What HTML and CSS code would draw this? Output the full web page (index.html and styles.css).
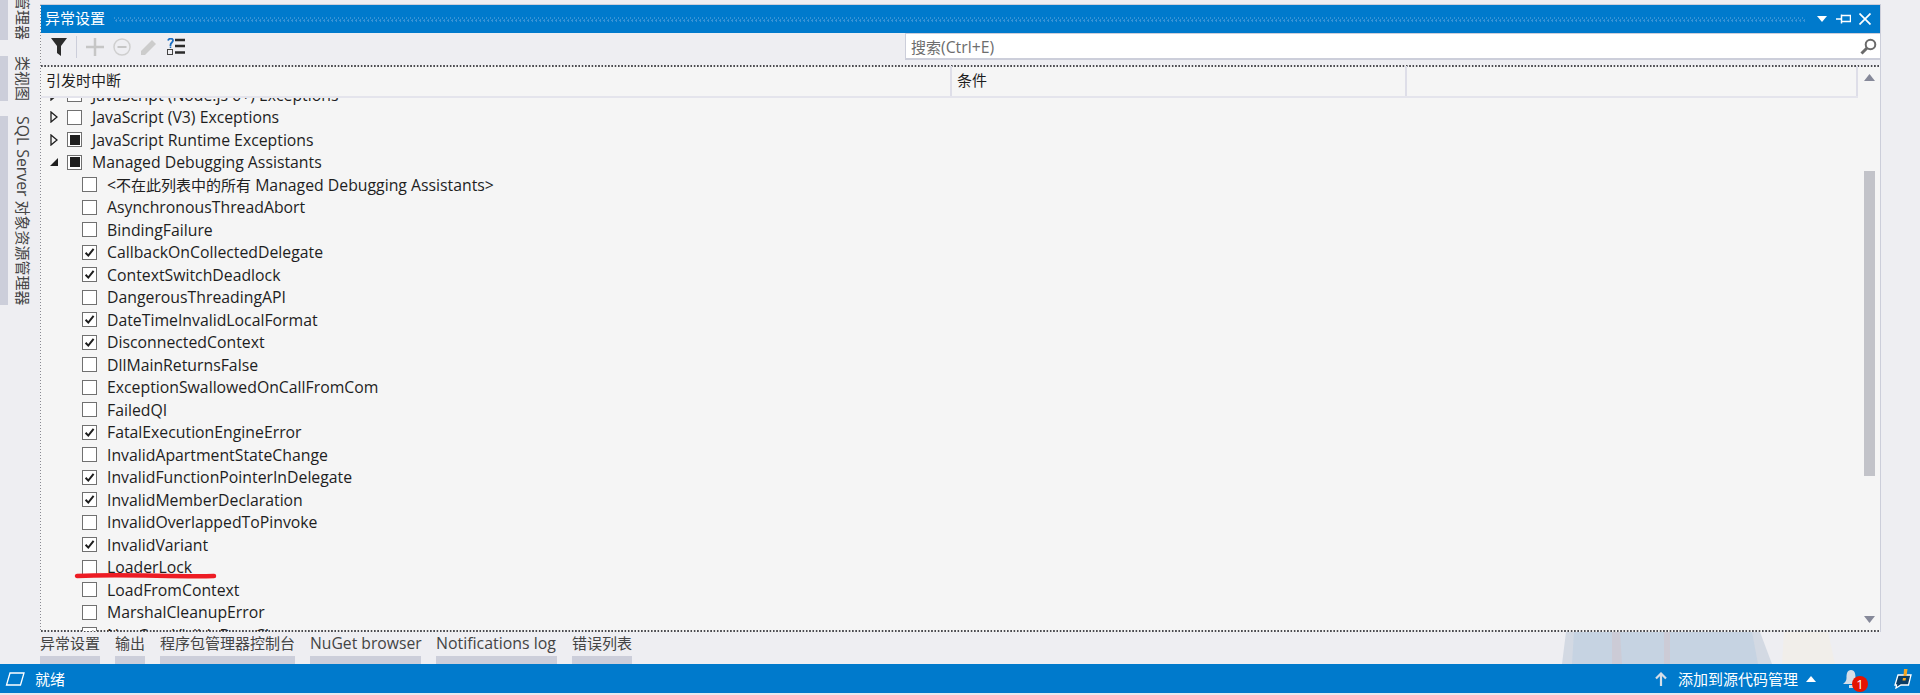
FILE: index.html
```html
<!DOCTYPE html>
<html lang="zh">
<head>
<meta charset="utf-8">
<title>异常设置</title>
<link rel="stylesheet" href="styles.css">
</head>
<body>
<svg class="defs" width="0" height="0" aria-hidden="true">
  <symbol id="chk" viewBox="0 0 13 13"><path d="M2.6 6.8 5.3 9.6 10.6 2.9" fill="none" stroke="#1e1e1e" stroke-width="2"/></symbol>
  <symbol id="open" viewBox="0 0 8 12"><path d="M1 1 7 6 1 11Z" fill="#f5f5f5" stroke="#1e1e1e" stroke-width="1.3"/></symbol>
</svg>
<div class="main">
  <nav class="rail">
    <div class="vtab vtab-a"><span class="vbar"></span><span class="vtext zh">解决方案资源管理器</span></div>
    <div class="vtab vtab-b"><span class="vbar"></span><span class="vtext zh">类视图</span></div>
    <div class="vtab vtab-c"><span class="vbar"></span><span class="vtext">SQL Server <span class="zh">对象资源管理器</span></span></div>
  </nav>
  <div class="work">
    <section class="panel">
      <header class="titlebar">
        <span class="title">异常设置</span>
        <span class="grip"></span>
        <span class="winbtns">
          <svg width="12" height="8" viewBox="0 0 12 8"><path d="M1 1H11L6 7Z" fill="#fff"/></svg>
          <svg width="15" height="10" viewBox="0 0 15 10"><path d="M0 5H5M5.500 0.500V9.500M5.500 1.500H14.500V7.500H5.500" fill="none" stroke="#fff" stroke-width="1.500"/></svg>
          <svg width="12" height="12" viewBox="0 0 12 12"><path d="M0.500 0.500 11.500 11.500M11.500 0.500 0.500 11.500" stroke="#fff" stroke-width="1.700"/></svg>
        </span>
      </header>
      <div class="toolbar">
        <div class="tools">
          <svg width="16" height="18" viewBox="0 0 16 18"><path d="M0 0H16L10 8V18L6 15V8Z" fill="#2b2b2b"/></svg>
          <span class="tsep"></span>
          <svg width="18" height="18" viewBox="0 0 18 18"><path d="M9 0V18M0 9H18" stroke="#c6c6c6" stroke-width="2.500"/></svg>
          <svg width="18" height="18" viewBox="0 0 18 18"><circle cx="9" cy="9" r="8" fill="none" stroke="#cfcfcf" stroke-width="1.500"/><path d="M4.500 9H13.500" stroke="#c6c6c6" stroke-width="2"/></svg>
          <svg width="18" height="18" viewBox="0 0 18 18"><path d="M1 13 12 2 16 6 5 17H1Z" fill="#cccccc"/></svg>
          <svg width="18" height="18" viewBox="0 0 18 18"><path d="M8 2H18M8 8H18M8 14.500H18" stroke="#2b2b2b" stroke-width="2.500"/><rect x="0.500" y="11.500" width="5" height="5" fill="none" stroke="#444"/><path d="M1 2.500C2 0 6 0 6 2.500 6 4.500 3.500 4.500 3.500 7V8" fill="none" stroke="#1b6ec2" stroke-width="1.800"/><path d="M3.500 8.500V10" stroke="#1b6ec2" stroke-width="1.500"/></svg>
        </div>
        <div class="search">
          <span class="search-hint"><span class="zh">搜索</span>(Ctrl+E)</span>
          <svg width="17" height="17" viewBox="0 0 17 17"><circle cx="10.500" cy="6.500" r="4.800" fill="none" stroke="#6a6a6a" stroke-width="2"/><path d="M7 10 1.500 15.500" stroke="#6a6a6a" stroke-width="3"/></svg>
        </div>
      </div>
      <div class="body">
        <div class="grid">
          <div class="head">
            <div class="col col-1">引发时中断</div>
            <div class="col col-2">条件</div>
            <div class="col col-3"></div>
          </div>
          <div class="list">
            <div class="rows">
              <div class="row"><svg class="tw" width="8" height="12"><use href="#open"/></svg><span class="cb"></span><span>JavaScript (Node.js 6+) Exceptions</span></div>
              <div class="row"><svg class="tw" width="8" height="12"><use href="#open"/></svg><span class="cb"></span><span>JavaScript (V3) Exceptions</span></div>
              <div class="row"><svg class="tw" width="8" height="12"><use href="#open"/></svg><span class="cb mixed"></span><span>JavaScript Runtime Exceptions</span></div>
              <div class="row"><svg class="tw" width="8" height="8" viewBox="0 0 8 8"><path d="M8 0V8H0Z" fill="#1e1e1e"/></svg><span class="cb mixed"></span><span>Managed Debugging Assistants</span></div>
              <div class="row sub"><span class="cb"></span><span>&lt;<span class="zh">不在此列表中的所有</span> Managed Debugging Assistants&gt;</span></div>
              <div class="row sub"><span class="cb"></span><span>AsynchronousThreadAbort</span></div>
              <div class="row sub"><span class="cb"></span><span>BindingFailure</span></div>
              <div class="row sub"><span class="cb"><svg width="13" height="13"><use href="#chk"/></svg></span><span>CallbackOnCollectedDelegate</span></div>
              <div class="row sub"><span class="cb"><svg width="13" height="13"><use href="#chk"/></svg></span><span>ContextSwitchDeadlock</span></div>
              <div class="row sub"><span class="cb"></span><span>DangerousThreadingAPI</span></div>
              <div class="row sub"><span class="cb"><svg width="13" height="13"><use href="#chk"/></svg></span><span>DateTimeInvalidLocalFormat</span></div>
              <div class="row sub"><span class="cb"><svg width="13" height="13"><use href="#chk"/></svg></span><span>DisconnectedContext</span></div>
              <div class="row sub"><span class="cb"></span><span>DllMainReturnsFalse</span></div>
              <div class="row sub"><span class="cb"></span><span>ExceptionSwallowedOnCallFromCom</span></div>
              <div class="row sub"><span class="cb"></span><span>FailedQI</span></div>
              <div class="row sub"><span class="cb"><svg width="13" height="13"><use href="#chk"/></svg></span><span>FatalExecutionEngineError</span></div>
              <div class="row sub"><span class="cb"></span><span>InvalidApartmentStateChange</span></div>
              <div class="row sub"><span class="cb"><svg width="13" height="13"><use href="#chk"/></svg></span><span>InvalidFunctionPointerInDelegate</span></div>
              <div class="row sub"><span class="cb"><svg width="13" height="13"><use href="#chk"/></svg></span><span>InvalidMemberDeclaration</span></div>
              <div class="row sub"><span class="cb"></span><span>InvalidOverlappedToPinvoke</span></div>
              <div class="row sub"><span class="cb"><svg width="13" height="13"><use href="#chk"/></svg></span><span>InvalidVariant</span></div>
              <div class="row sub"><span class="cb"></span><span>LoaderLock</span></div>
              <div class="row sub"><span class="cb"></span><span>LoadFromContext</span></div>
              <div class="row sub"><span class="cb"></span><span>MarshalCleanupError</span></div>
              <div class="row sub"><span class="cb"><svg width="13" height="13"><use href="#chk"/></svg></span><span>NonComVisibleBaseClass</span></div>
            </div>
            <svg class="scribble" width="146" height="10" viewBox="0 0 146 10"><path d="M3 6C50 4 100 7 140 6" fill="none" stroke="#ed1c24" stroke-width="4.500" stroke-linecap="round"/></svg>
          </div>
        </div>
        <div class="scroll">
          <svg width="11" height="7" viewBox="0 0 11 7"><path d="M5.500 0 11 7H0Z" fill="#868999"/></svg>
          <div class="track"><div class="thumb"></div></div>
          <svg width="11" height="7" viewBox="0 0 11 7"><path d="M0 0H11L5.500 7Z" fill="#868999"/></svg>
        </div>
      </div>
    </section>
    <div class="tabs">
      <svg class="wall" width="280" height="32" viewBox="0 0 280 32"><path d="M4 0H198L210 32H0Z" fill="#d3d9e3"/><path d="M12 0H190L196 32H10Z" fill="#c6d3e2"/><path d="M50 0H58L60 32H50ZM102 0H108L108 32H102Z" fill="#cccbd6"/><path d="M222 0H266L273 32H220Z" fill="#f1eeea"/></svg>
      <div class="tab tab-a">异常设置</div>
      <div class="tab tab-b">输出</div>
      <div class="tab tab-c">程序包管理器控制台</div>
      <div class="tab tab-d">NuGet browser</div>
      <div class="tab tab-e">Notifications log</div>
      <div class="tab tab-f">错误列表</div>
    </div>
  </div>
</div>
<footer class="status">
  <svg class="st-icon" width="20" height="14" viewBox="0 0 20 14"><path d="M5 1H19L15.500 13H1.500Z" fill="none" stroke="#fff" stroke-width="1.300"/></svg>
  <span class="st-text">就绪</span>
  <span class="st-right">
    <svg class="st-up" width="12" height="14" viewBox="0 0 12 14"><path d="M6 14V2M1 6.500 6 1.500 11 6.500" fill="none" stroke="#d4dee8" stroke-width="2.200"/></svg>
    <span class="st-src">添加到源代码管理</span>
    <svg class="st-caret" width="10" height="6" viewBox="0 0 10 6"><path d="M5 0 10 6H0Z" fill="#fff"/></svg>
    <span class="bell">
      <svg width="18" height="18" viewBox="0 0 18 18"><path d="M9 0C13 0 13.500 4 13.500 8C13.500 11 15 12 17 14H1C3 12 4.500 11 4.500 8C4.500 4 5 0 9 0ZM7 15H11V18H7Z" fill="#d4dee8"/></svg>
      <span class="badge">1</span>
    </span>
    <svg class="fb" width="18" height="20" viewBox="0 0 18 20"><path d="M4 6H17L14.500 16H7L2 19 2.500 16H1Z" fill="#0a3d66" stroke="#fff" stroke-width="1.300"/><path d="M10 0H13.500L12.500 7H9.500ZM9 9H12L11.500 11.500H8.500Z" fill="#f5a623"/></svg>
  </span>
</footer>
<div class="edge"></div>
</body>
</html>
```

FILE: styles.css
```css
* { box-sizing: border-box; }
html, body { margin: 0; padding: 0; }
body {
  width: 1920px;
  height: 695px;
  overflow: hidden;
  display: flex;
  flex-direction: column;
  background: #eeeef2;
  color: #1e1e1e;
  font-family: "Open Sans", "Noto Sans CJK SC", sans-serif;
  font-size: 15.800px;
}
.zh { font-size: 15px; }
.defs { position: absolute; }
.main { display: flex; height: 664px; }

.rail { width: 40px; display: flex; flex-direction: column; flex: none; }
.vtab { display: flex; overflow: hidden; }
.vtab-a { height: 40px; align-items: flex-end; }
.vtab-b { height: 45px; margin-top: 16px; }
.vtab-c { height: 189px; margin-top: 15px; }
.vbar { width: 8px; height: 100%; background: #ccceda; flex: none; align-self: stretch; }
.vtext {
  margin-left: 7px;
  writing-mode: vertical-rl;
  text-orientation: sideways;
  white-space: nowrap;
  color: #444444;
  line-height: 16px;
}

.work { width: 1841px; display: flex; flex-direction: column; flex: none; }
.panel {
  margin-top: 4px;
  height: 628px;
  display: flex;
  flex-direction: column;
  border-top: 1px solid #ccceda;
  border-right: 1px solid #ccceda;
  background: #f5f5f5;
  background-image: linear-gradient(#8a8a92 50%, transparent 50%);
  background-size: 1px 3px;
  background-repeat: repeat-y;
  padding-left: 1px;
}
.titlebar { height: 28px; display: flex; align-items: center; background: #007acc; color: #fff; flex: none; }
.title { margin-left: 4px; font-size: 15px; line-height: 20px; margin-top: -2px; }
.grip {
  flex: 1;
  height: 5px;
  margin: 0 11px 0 8px;
  background-image: radial-gradient(circle at 1.500px 1px, #3a94d6 1px, transparent 1.100px), radial-gradient(circle at 3.500px 3.500px, #3a94d6 1px, transparent 1.100px);
  background-size: 4px 5px;
}
.winbtns { display: flex; align-items: center; gap: 8px; width: 64px; }

.toolbar { height: 32px; display: flex; background: #eeeef2; flex: none; }
.tools { width: 864px; display: flex; align-items: center; padding: 0 0 4px 10px; gap: 9px; flex: none; }
.tsep { width: 1px; height: 22px; background: #ccceda; }
.search {
  flex: 1;
  height: 27px;
  display: flex;
  align-items: center;
  justify-content: space-between;
  background: #fff;
  border-top: 1px solid #ccceda;
  border-left: 1px solid #ccceda;
  border-bottom: 2px solid #ccceda;
  padding: 0 3px 0 5px;
}
.search-hint { color: #6d6d6d; line-height: 20px; margin-top: 2px; }

.body {
  flex: 1;
  min-height: 0;
  display: flex;
  border-top: 1px solid transparent;
  border-bottom: 1px solid transparent;
  background:
    linear-gradient(90deg, #4a4a50 50%, transparent 50%) 0 0 / 3.300px 2px repeat-x,
    linear-gradient(90deg, #4a4a50 50%, transparent 50%) 0 100% / 3.300px 2px repeat-x,
    #f5f5f5;
  background-origin: border-box;
}
.grid { width: 1817px; display: flex; flex-direction: column; }
.head { height: 32px; display: flex; border-bottom: 2px solid #e4e4ec; flex: none; }
.col { border-right: 2px solid #dedee8; padding: 3px 0 0 5px; line-height: 22px; font-size: 15px; }
.col-1 { width: 911px; }
.col-2 { width: 455px; padding-left: 5px; }
.col-3 { flex: 1; }
.list { flex: 1; min-height: 0; overflow: hidden; position: relative; }
.rows { margin-top: -14.500px; }
.row { height: 22.500px; line-height: 20px; display: flex; align-items: center; padding-left: 9px; white-space: nowrap; }
.row.sub { padding-left: 41px; }
.tw { flex: none; margin-right: 9px; }
.cb {
  width: 15px;
  height: 15px;
  flex: none;
  margin-right: 10px;
  border: 1px solid #707070;
  background: #fff;
  display: flex;
  align-items: center;
  justify-content: center;
}
.cb svg { display: block; }
.cb.mixed::after { content: ""; width: 10px; height: 10px; background: #1e1e1e; }
.scribble { position: absolute; left: 33px; top: 472px; }

.scroll {
  flex: 1;
  display: flex;
  flex-direction: column;
  align-items: center;
  padding: 8px 0 8px;
}
.scroll svg { flex: none; }
.track { flex: 1; width: 11px; padding-top: 90px; padding-bottom: 140px; }
.thumb { height: 100%; background: #c2c3c9; }

.tabs { flex: 1; display: flex; gap: 15px; position: relative; }
.tab { color: #444444; font-size: 15px; line-height: 20px; padding-top: 1px; white-space: nowrap; background: linear-gradient(#ccceda, #ccceda) 0 100% / 100% 8px no-repeat; }
.tab-a { width: 60px; }
.tab-b { width: 30px; }
.tab-c { width: 135px; }
.tab-d { width: 111px; font-size: 15.700px; }
.tab-e { width: 121px; font-size: 15.900px; }
.tab-f { width: 60px; }
.wall { position: absolute; left: 1522px; top: 0; }

.status { height: 29px; display: flex; align-items: center; background: #007acc; color: #fff; flex: none; position: relative; }
.st-icon { margin-left: 5px; }
.st-text { margin-left: 10px; font-size: 15px; }
.st-right { margin-left: auto; display: flex; align-items: center; }
.st-up { margin-right: 11px; margin-left: 1px; }
.st-src { font-size: 15px; margin-right: 8px; }
.st-caret { margin-right: 26px; }
.bell { position: relative; display: flex; width: 18px; margin-right: 34px; }
.badge {
  position: absolute;
  left: 10px;
  top: 6px;
  width: 16px;
  height: 16px;
  border-radius: 50%;
  background: #e51400;
  color: #fff;
  font-size: 13px;
  line-height: 16px;
  text-align: center;
}
.fb { margin-right: 8px; }
.edge { height: 2px; background: #e9e9ed; flex: none; }
```
